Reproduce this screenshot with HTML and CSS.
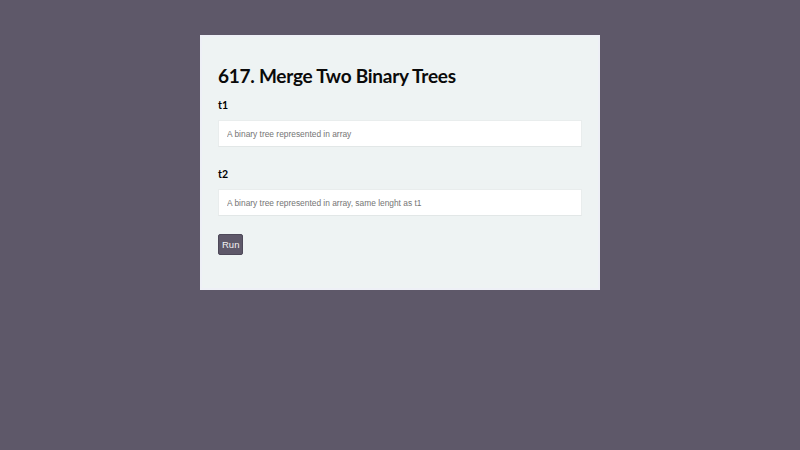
FILE: index.html
```html
<!DOCTYPE html>
<html>
<head>
<meta charset="utf-8">
<link rel="stylesheet" href="styles.css">
</head>
<body>
<main class="card">
  <h1 class="title">617. Merge Two Binary Trees</h1>
  <form class="form">
    <div class="field">
      <label class="label" for="t1">t1</label>
      <input class="input" id="t1" type="text" placeholder="A binary tree represented in array">
    </div>
    <div class="field">
      <label class="label" for="t2">t2</label>
      <input class="input" id="t2" type="text" placeholder="A binary tree represented in array, same lenght as t1">
    </div>
    <button class="btn" type="button">Run</button>
  </form>
</main>
</body>
</html>
```
FILE: styles.css
```css
html, body {
  margin: 0;
  padding: 0;
  background: #5e5869;
  width: 800px;
  height: 450px;
}
body {
  display: flex;
  justify-content: center;
  align-items: flex-start;
  font-family: "Liberation Sans", Arial, sans-serif;
}
.card {
  box-sizing: border-box;
  margin-top: 35px;
  width: 400px;
  height: 255px;
  background: #eef3f3;
  border: 2px solid #eef0f6;
  padding: 27px 16px 0;
}
.title {
  margin: 0;
  font-family: "Lato", sans-serif;
  font-weight: 700;
  font-size: 19px;
  line-height: 24px;
  letter-spacing: -0.25px;
  color: #0a0a0a;
}
.form {
  display: flex;
  flex-direction: column;
  align-items: flex-start;
  margin-top: 8px;
}
.field {
  width: 100%;
  display: flex;
  flex-direction: column;
  margin-bottom: 18px;
}
.label {
  font-family: "Lato", sans-serif;
  font-weight: 700;
  font-size: 10.5px;
  line-height: 15px;
  color: #000;
  margin-top: 2px;
  margin-bottom: 7px;
}
.input {
  box-sizing: border-box;
  width: 100%;
  height: 27px;
  border: 1px solid #e9eded;
  border-bottom-color: #e2e7e7;
  background: #fff;
  padding: 0 8px;
  font-family: "Liberation Sans", Arial, sans-serif;
  font-size: 8.4px;
  color: #333;
  outline: none;
}
.input::placeholder {
  color: #757575;
}
.btn {
  height: 21px;
  padding: 0 3px;
  border: 1px solid #4e4959;
  border-radius: 2px;
  background: #5e5869;
  color: #f2f2f2;
  font-family: "Liberation Sans", Arial, sans-serif;
  font-size: 9.5px;
}
```
